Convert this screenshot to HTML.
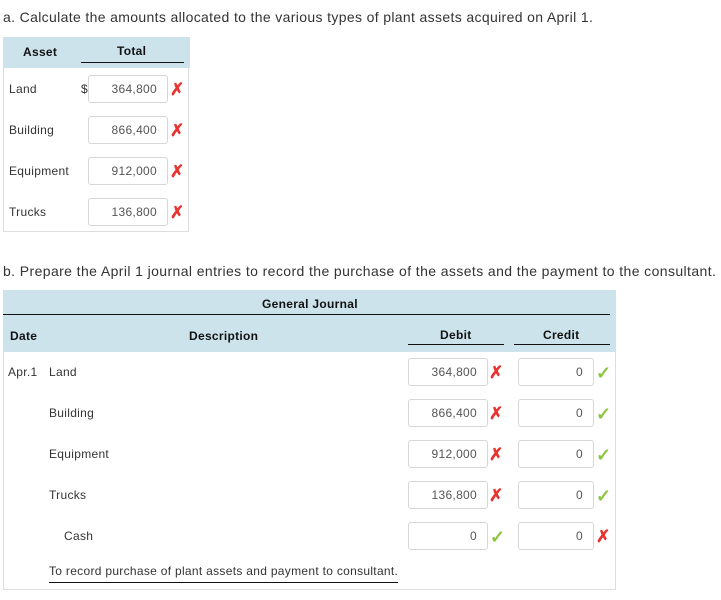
<!DOCTYPE html>
<html><head><style>
body{margin:0;width:721px;height:600px;background:#fff;font-family:"Liberation Sans",sans-serif;color:#333;position:relative;overflow:hidden;letter-spacing:0.3px}
.a{position:absolute;white-space:nowrap}
.t{font-size:12px}
.in{position:absolute;border:1px solid #d6d6d6;border-radius:3px;height:28px;box-sizing:border-box;font-size:12px;color:#555;text-align:right;padding-right:10px;line-height:27px;background:#fff}
.b{font-weight:bold;font-size:12px;color:#111}
.x{position:absolute;color:#e8332f;font-size:17px;font-weight:bold;line-height:17px}
.c{position:absolute;color:#8cc63f;font-size:18px;font-weight:bold;line-height:18px}
</style></head><body>
<div class="a" style="left:3px;top:9px;font-size:14px;color:#333;letter-spacing:0.35px">a. Calculate the amounts allocated to the various types of plant assets acquired on April 1.</div>
<div class="a" style="left:3px;top:37px;width:186px;height:195px;border:1px solid #ddd;box-sizing:border-box"></div>
<div class="a" style="left:3px;top:37px;width:187px;height:31px;background:#cce3ec"></div>
<div class="a b" style="left:23px;top:45px">Asset</div>
<div class="a b" style="left:117px;top:44px">Total</div>
<div class="a" style="left:81px;top:62px;width:103px;height:1px;background:#111"></div>
<div class="a t" style="left:9px;top:82px">Land</div>
<div class="a t" style="left:81px;top:82px">$</div>
<div class="in" style="left:88px;top:75px;width:80px">364,800</div><div class="x" style="left:170px;top:81px">✗</div>
<div class="a t" style="left:9px;top:123px">Building</div>
<div class="in" style="left:88px;top:116px;width:80px">866,400</div><div class="x" style="left:170px;top:122px">✗</div>
<div class="a t" style="left:9px;top:164px">Equipment</div>
<div class="in" style="left:88px;top:157px;width:80px">912,000</div><div class="x" style="left:170px;top:163px">✗</div>
<div class="a t" style="left:9px;top:205px">Trucks</div>
<div class="in" style="left:88px;top:198px;width:80px">136,800</div><div class="x" style="left:170px;top:204px">✗</div>

<div class="a" style="left:3px;top:263px;font-size:14px;letter-spacing:0.4px">b. Prepare the April 1 journal entries to record the purchase of the assets and the payment to the consultant.</div>
<div class="a" style="left:3px;top:290px;width:613px;height:300px;border:1px solid #ddd;box-sizing:border-box"></div>
<div class="a" style="left:3px;top:290px;width:613px;height:62px;background:#cce3ec"></div>
<div class="a b" style="left:262px;top:297px">General Journal</div>
<div class="a" style="left:3px;top:314px;width:607px;height:1px;background:#111"></div>
<div class="a b" style="left:10px;top:329px">Date</div>
<div class="a b" style="left:189px;top:329px">Description</div>
<div class="a b" style="left:440px;top:328px">Debit</div>
<div class="a b" style="left:543px;top:328px">Credit</div>
<div class="a" style="left:408px;top:344px;width:96px;height:1px;background:#111"></div>
<div class="a" style="left:514px;top:344px;width:96px;height:1px;background:#111"></div>

<div class="a t" style="left:8px;top:365px">Apr.1</div>
<div class="a t" style="left:49px;top:365px">Land</div>
<div class="in" style="left:408px;top:358px;width:80px">364,800</div><div class="x" style="left:489px;top:364px">✗</div>
<div class="in" style="left:518px;top:358px;width:76px">0</div><div class="c" style="left:596px;top:364px">✓</div>

<div class="a t" style="left:49px;top:406px">Building</div>
<div class="in" style="left:408px;top:399px;width:80px">866,400</div><div class="x" style="left:489px;top:405px">✗</div>
<div class="in" style="left:518px;top:399px;width:76px">0</div><div class="c" style="left:596px;top:405px">✓</div>

<div class="a t" style="left:49px;top:447px">Equipment</div>
<div class="in" style="left:408px;top:440px;width:80px">912,000</div><div class="x" style="left:489px;top:446px">✗</div>
<div class="in" style="left:518px;top:440px;width:76px">0</div><div class="c" style="left:596px;top:446px">✓</div>

<div class="a t" style="left:49px;top:488px">Trucks</div>
<div class="in" style="left:408px;top:481px;width:80px">136,800</div><div class="x" style="left:489px;top:487px">✗</div>
<div class="in" style="left:518px;top:481px;width:76px">0</div><div class="c" style="left:596px;top:487px">✓</div>

<div class="a t" style="left:64px;top:529px">Cash</div>
<div class="in" style="left:408px;top:522px;width:80px">0</div><div class="c" style="left:490px;top:528px">✓</div>
<div class="in" style="left:518px;top:522px;width:76px">0</div><div class="x" style="left:596px;top:528px">✗</div>

<div class="a t" style="left:49px;top:564px">To record purchase of plant assets and payment to consultant.</div>
<div class="a" style="left:49px;top:582px;width:349px;height:1px;background:#111"></div>
</body></html>
